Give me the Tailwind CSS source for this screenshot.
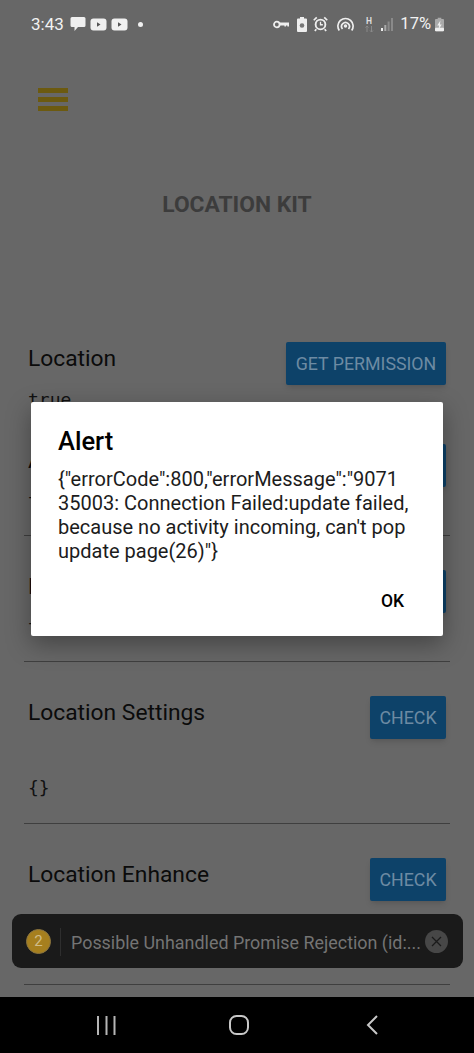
<!DOCTYPE html>
<html lang="en">
  <head>
    <meta charset="UTF-8" />
    <meta name="viewport" content="width=device-width, initial-scale=1.0" />
    <title>Location Kit</title>
    <script src="https://cdn.jsdelivr.net/npm/@tailwindcss/browser@4"></script>
  </head>
  <body class="w-[474px] h-[1053px] overflow-hidden bg-[#676767] font-['Roboto',sans-serif]">
    <div class="relative w-[474px] h-[1053px] overflow-hidden flex flex-col">
      <!-- status bar -->
      <div class="h-[48px] shrink-0 flex items-center justify-between pl-[31px] pr-[30px] text-[#f2f2f2]">
        <div class="flex items-center">
          <span class="text-[17px] leading-none">3:43</span>
          <svg class="ml-[6px]" width="16" height="16" viewBox="0 0 16 16"><path d="M2 1h12a1.500 1.500 0 0 1 1.500 1.500v7A1.500 1.500 0 0 1 14 11H8l-3.500 4V11H2A1.500 1.500 0 0 1 .5 9.500v-7A1.500 1.500 0 0 1 2 1z" fill="#f0f0f0"/></svg>
          <svg class="ml-[4px]" width="17" height="13" viewBox="0 0 17 13"><rect x=".5" y=".5" width="16" height="12" rx="3" fill="#f0f0f0"/><path d="M7 4.200l3.500 2.300L7 8.800z" fill="#555"/></svg>
          <svg class="ml-[4px]" width="17" height="13" viewBox="0 0 17 13"><rect x=".5" y=".5" width="16" height="12" rx="3" fill="#f0f0f0"/><path d="M7 4.200l3.500 2.300L7 8.800z" fill="#555"/></svg>
          <span class="ml-[10px] w-[5px] h-[5px] rounded-full bg-[#f0f0f0]"></span>
        </div>
        <div class="flex items-center">
          <svg width="16" height="9" viewBox="0 0 16 9" fill="none"><circle cx="3.800" cy="4.500" r="2.800" stroke="#eee" stroke-width="1.800"/><path d="M6.500 2.600h9.500v4h-1.600V5.400h-1.400v1.200h-1.600V5.400H6.500z" fill="#eee"/></svg>
          <svg class="ml-[8px]" width="10" height="15" viewBox="0 0 10 15"><path d="M3 0h4v1.500h2a1 1 0 0 1 1 1V14a1 1 0 0 1-1 1H1a1 1 0 0 1-1-1V2.500a1 1 0 0 1 1-1h2z" fill="#eee"/><circle cx="5" cy="8.500" r="2.300" fill="#777"/></svg>
          <svg class="ml-[6px]" width="15" height="16" viewBox="0 0 16 16" fill="none"><circle cx="8" cy="8.500" r="5.200" stroke="#eee" stroke-width="2"/><path d="M8 5.500v3.300h2.500" stroke="#eee" stroke-width="1.400"/><path d="M.8 4L4 1M15.200 4L12 1M3.500 13.500l-1.500 2M12.500 13.500l1.500 2" stroke="#eee" stroke-width="1.800"/></svg>
          <svg class="ml-[9px]" width="17" height="14" viewBox="0 0 17 14" fill="none" stroke="#eee" stroke-width="1.700"><path d="M2.300 13.500a7.600 7.600 0 1 1 12.400 0"/><path d="M5.500 12a3.900 3.900 0 1 1 6 0"/><circle cx="8.500" cy="9" r=".9" fill="#eee"/></svg>
          <svg class="ml-[11px]" width="9" height="17" viewBox="0 0 9 17"><text x="1" y="8" font-family="Roboto" font-size="8.500" font-weight="700" fill="#ddd">H</text><path d="M2 10v6M0.500 11.500L2 10l1.500 1.500M6.500 16v-6M5 14.500L6.500 16 8 14.500" stroke="#8a8a8a" stroke-width="1" fill="none"/></svg>
          <svg class="ml-[7px]" width="12" height="14" viewBox="0 0 12 14"><rect x="0" y="11" width="2" height="3" fill="#eee"/><rect x="3.300" y="8" width="2" height="6" fill="#aaa"/><rect x="6.600" y="4.500" width="2" height="9.500" fill="#8a8a8a"/><rect x="10" y="1" width="2" height="13" fill="#8a8a8a"/></svg>
          <span class="ml-[7px] text-[16.500px] leading-none">17%</span>
          <svg class="ml-[4px]" width="9" height="15" viewBox="0 0 10 15"><rect x="3" y="0" width="4" height="2" fill="#aaa"/><rect x="0" y="1.500" width="10" height="13.500" rx="1" fill="#aaa"/><rect x="0" y="11" width="10" height="4" rx="1" fill="#eee"/><path d="M6 3L2.500 8.500h2L4 13l3.500-5.500h-2z" fill="#eee"/></svg>
        </div>
      </div>

      <!-- header -->
      <div class="pl-[38px] pt-[40px]">
        <div class="w-[30px] flex flex-col gap-[4px]">
          <span class="h-[5px] bg-[#6c5a10]"></span>
          <span class="h-[5px] bg-[#6c5a10]"></span>
          <span class="h-[5px] bg-[#6c5a10]"></span>
        </div>
      </div>
      <h1 class="mt-[81px] text-center text-[22.800px] leading-[26px] font-bold text-[#3c3c3c]">LOCATION KIT</h1>

      <!-- rows -->
      <div class="mt-[124px] px-[24px]">
        <div class="h-[194px] border-b border-[#3f3f3f]">
          <div class="flex justify-between px-[4px]">
            <span class="text-[22.800px] leading-[34px] text-[#0b0b0b]">Location</span>
            <button class="h-[43px] w-[160px] pt-[2px] bg-[#0d4269] rounded-[2px] shadow-md text-[17.800px] text-[#6d8ba3]">GET PERMISSION</button>
          </div>
          <div class="pl-[4px] mt-[3px] font-['DejaVu_Sans_Mono',monospace] text-[18px] leading-[24px] text-[#111]">true</div>
          <div class="flex justify-between px-[4px] mt-[32px]">
            <span class="text-[22.800px] leading-[34px] text-[#0b0b0b]">Activity</span>
            <button class="h-[43px] w-[76px] pt-[2px] bg-[#0d4269] rounded-[2px] shadow-md text-[17.800px] text-[#6d8ba3]">CHECK</button>
          </div>
          <div class="pl-[4px] mt-[2px] font-['DejaVu_Sans_Mono',monospace] text-[18px] leading-[24px] text-[#111]">true</div>
        </div>
        <div class="h-[126px] border-b border-[#3f3f3f] pt-[34px]">
          <div class="flex justify-between px-[4px]">
            <span class="text-[22.800px] leading-[34px] text-[#0b0b0b]">Location</span>
            <button class="h-[43px] w-[76px] pt-[2px] bg-[#0d4269] rounded-[2px] shadow-md text-[17.800px] text-[#6d8ba3]">CHECK</button>
          </div>
          <div class="pl-[4px] mt-[2px] font-['DejaVu_Sans_Mono',monospace] text-[18px] leading-[24px] text-[#111]">true</div>
        </div>
        <div class="h-[162px] border-b border-[#3f3f3f] pt-[34px]">
          <div class="flex justify-between px-[4px]">
            <span class="text-[22.800px] leading-[34px] text-[#0b0b0b]">Location Settings</span>
            <button class="h-[43px] w-[76px] pt-[2px] bg-[#0d4269] rounded-[2px] shadow-md text-[17.800px] text-[#6d8ba3]">CHECK</button>
          </div>
          <div class="pl-[4px] mt-[37px] font-['DejaVu_Sans_Mono',monospace] text-[18px] leading-[24px] text-[#111]">{}</div>
        </div>
        <div class="h-[161px] border-b border-[#3f3f3f] pt-[34px]">
          <div class="flex justify-between px-[4px]">
            <span class="text-[22.800px] leading-[34px] text-[#0b0b0b]">Location Enhance</span>
            <button class="h-[43px] w-[76px] pt-[2px] bg-[#0d4269] rounded-[2px] shadow-md text-[17.800px] text-[#6d8ba3]">CHECK</button>
          </div>
        </div>
      </div>

      <!-- alert dialog -->
      <div class="absolute left-[31px] top-[402px] w-[412px] h-[234px] bg-white rounded-[2px] shadow-[0_8px_24px_rgba(0,0,0,0.35)] pl-[27px] pr-[24px] pt-[23px]">
        <h2 class="text-[25.500px] leading-[32px] font-medium text-black">Alert</h2>
        <p class="mt-[10px] text-[20px] leading-[24px] text-[#1c1c1c]">{"errorCode":800,"errorMessage":"9071<br />35003: Connection Failed:update failed,<br />because no activity incoming, can't pop<br />update page(26)"}</p>
        <div class="absolute right-[39px] bottom-[25px] text-[17.500px] leading-[20px] font-medium text-black">OK</div>
      </div>

      <!-- warning toast -->
      <div class="absolute left-[12px] top-[914px] w-[451px] h-[54px] rounded-[9px] bg-[#1a1a1a] flex items-center pl-[14px] pr-[14px] pt-[1px]">
        <div class="w-[25px] h-[25px] rounded-full bg-[#a67f1e] border border-[#8a7440] flex items-center justify-center text-[15px] text-[#d0bc88] shrink-0">2</div>
        <div class="ml-[9px] w-px h-[28px] bg-[#2e2e2e] shrink-0"></div>
        <span class="ml-[10px] mt-[2px] text-[17.900px] leading-none text-[#747474] whitespace-nowrap">Possible Unhandled Promise Rejection (id:...</span>
        <div class="absolute right-[15px] top-[16px] w-[23px] h-[23px] rounded-full bg-[#474747] flex items-center justify-center">
          <svg width="11" height="11" viewBox="0 0 11 11"><path d="M1 1l9 9M10 1l-9 9" stroke="#1a1a1a" stroke-width="1.300"/></svg>
        </div>
      </div>

      <!-- navigation bar -->
      <div class="absolute left-0 right-0 bottom-0 h-[56px] bg-black flex items-center">
        <div class="w-[212px] flex justify-center">
          <svg width="20" height="19" viewBox="0 0 20 19"><path d="M2 0v19M10.500 0v19M18.500 0v19" stroke="#b5b5b5" stroke-width="2"/></svg>
        </div>
        <div class="w-[54px] flex justify-center">
          <svg width="20" height="20" viewBox="0 0 20 20" fill="none"><rect x="1" y="1" width="18" height="18" rx="6.500" stroke="#c8c8c8" stroke-width="2"/></svg>
        </div>
        <div class="ml-[100px] flex">
          <svg width="12" height="20" viewBox="0 0 12 20" fill="none"><path d="M11 1L2 10l9 9" stroke="#c8c8c8" stroke-width="2"/></svg>
        </div>
      </div>
    </div>
  </body>
</html>
